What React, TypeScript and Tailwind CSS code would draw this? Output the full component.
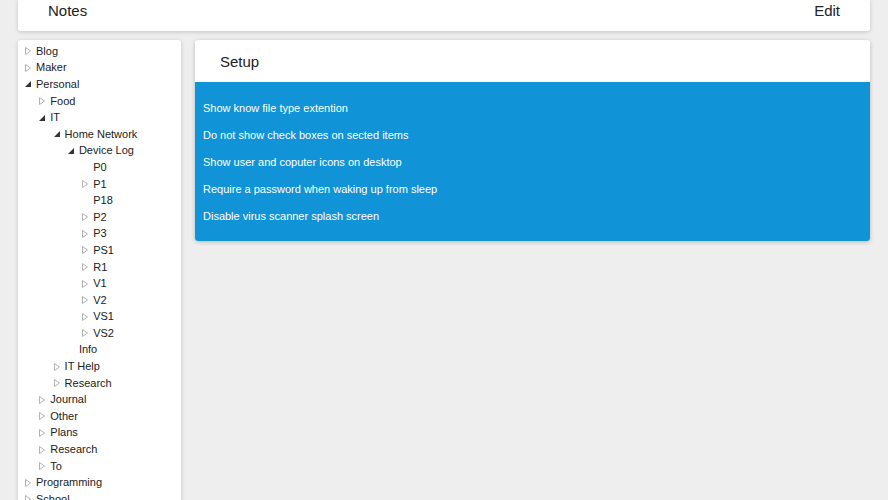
import React from 'react';

type Node = { label: string; depth: number; state: 'open' | 'closed' | 'leaf' };

const tree: Node[] = [
  { label: 'Blog', depth: 0, state: 'closed' },
  { label: 'Maker', depth: 0, state: 'closed' },
  { label: 'Personal', depth: 0, state: 'open' },
  { label: 'Food', depth: 1, state: 'closed' },
  { label: 'IT', depth: 1, state: 'open' },
  { label: 'Home Network', depth: 2, state: 'open' },
  { label: 'Device Log', depth: 3, state: 'open' },
  { label: 'P0', depth: 4, state: 'leaf' },
  { label: 'P1', depth: 4, state: 'closed' },
  { label: 'P18', depth: 4, state: 'leaf' },
  { label: 'P2', depth: 4, state: 'closed' },
  { label: 'P3', depth: 4, state: 'closed' },
  { label: 'PS1', depth: 4, state: 'closed' },
  { label: 'R1', depth: 4, state: 'closed' },
  { label: 'V1', depth: 4, state: 'closed' },
  { label: 'V2', depth: 4, state: 'closed' },
  { label: 'VS1', depth: 4, state: 'closed' },
  { label: 'VS2', depth: 4, state: 'closed' },
  { label: 'Info', depth: 3, state: 'leaf' },
  { label: 'IT Help', depth: 2, state: 'closed' },
  { label: 'Research', depth: 2, state: 'closed' },
  { label: 'Journal', depth: 1, state: 'closed' },
  { label: 'Other', depth: 1, state: 'closed' },
  { label: 'Plans', depth: 1, state: 'closed' },
  { label: 'Research', depth: 1, state: 'closed' },
  { label: 'To', depth: 1, state: 'closed' },
  { label: 'Programming', depth: 0, state: 'closed' },
  { label: 'School', depth: 0, state: 'closed' },
];

const indent = ['pl-[7px]', 'pl-[21.3px]', 'pl-[35.6px]', 'pl-[49.9px]', 'pl-[64.2px]'];

const settings = [
  'Show know file type extention',
  'Do not show check boxes on sected items',
  'Show user and coputer icons on desktop',
  'Require a password when waking up from sleep',
  'Disable virus scanner splash screen',
];

function Toggle({ state }: { state: Node['state'] }) {
  if (state === 'leaf') return <span className="w-[11px] shrink-0" />;
  return (
    <span className="w-[11px] shrink-0 flex items-center">
      {state === 'closed' ? (
        <svg width="6" height="8" viewBox="0 0 6 8">
          <path d="M0.5 0.5 L5.5 4 L0.5 7.5 Z" fill="none" stroke="#b3b3b3" strokeWidth="1" />
        </svg>
      ) : (
        <svg width="6" height="6" viewBox="0 0 6 6">
          <path d="M6 0 L6 6 L0 6 Z" fill="#333" />
        </svg>
      )}
    </span>
  );
}

export default function App() {
  return (
    <div className="h-[500px] overflow-hidden bg-[#eeeeee] px-[18px] font-['Liberation_Sans',Arial,sans-serif] text-[#222]">
      {/* Header */}
      <div className="h-[31px] bg-white rounded-b-[3px] shadow-[0_1px_4px_rgba(0,0,0,0.18)] flex items-center justify-between pl-[30px] pr-[30px] text-[15px] leading-none pb-[11px]">
        <span>Notes</span>
        <span>Edit</span>
      </div>

      <div className="flex gap-[14px] mt-[9px] items-start">
        {/* Sidebar tree */}
        <div className="w-[163px] shrink-0 h-[470px] bg-white rounded-t-[3px] shadow-[0_1px_4px_rgba(0,0,0,0.18)] pt-[3px] text-[11px]">
          {tree.map((n, i) => (
            <div key={i} className={`h-[16.6px] flex items-center ${indent[n.depth]}`}>
              <Toggle state={n.state} />
              <span className="leading-none">{n.label}</span>
            </div>
          ))}
        </div>

        {/* Main panel */}
        <div className="flex-1 bg-white rounded-[3px] shadow-[0_1px_4px_rgba(0,0,0,0.22)] overflow-hidden">
          <div className="h-[42px] flex items-center pl-[25px] text-[15px] leading-none">Setup</div>
          <div className="bg-[#1193d7] pt-[13px] pb-[11px] pl-[8px] text-white text-[11px]">
            {settings.map((s, i) => (
              <div key={i} className="h-[27px] flex items-center leading-none">{s}</div>
            ))}
          </div>
        </div>
      </div>
    </div>
  );
}
